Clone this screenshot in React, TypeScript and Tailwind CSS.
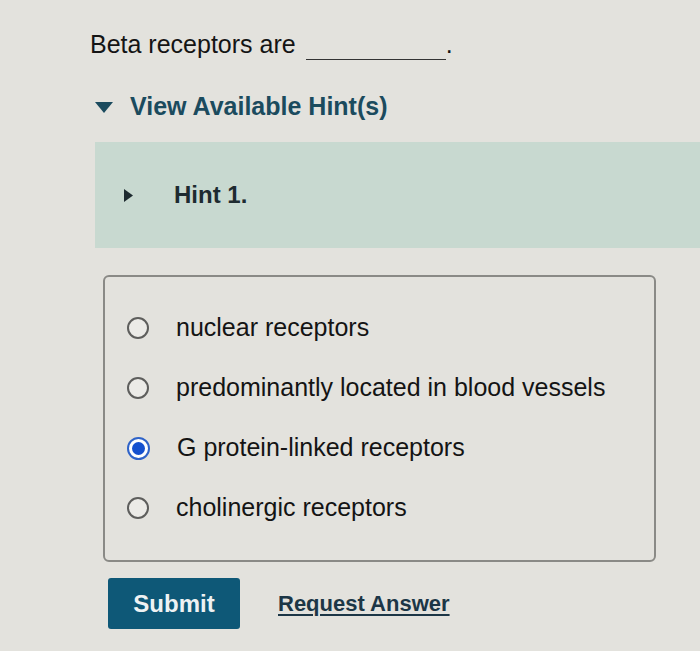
import React from 'react';

const options = [
  'nuclear receptors',
  'predominantly located in blood vessels',
  'G protein-linked receptors',
  'cholinergic receptors',
];

const App: React.FC = () => {
  const selected = 2;

  return (
    <div
      className="min-h-[651px] w-[700px] bg-[#e3e2dd] pl-[90px] pt-[30px] text-[#141414] overflow-hidden"
      style={{ fontFamily: '"Liberation Sans", Arial, sans-serif' }}
    >
      {/* question */}
      <div className="flex h-[30px] items-center text-[25px]">
        <span>Beta receptors are</span>
        <span className="ml-[10px] inline-block h-[30px] w-[140px] border-b border-[#333]"></span>
        <span>.</span>
      </div>

      {/* hints toggle */}
      <div className="mt-[32px] flex h-[30px] items-center">
        <svg width="18" height="11" viewBox="0 0 18 11" className="ml-[5px]">
          <path d="M0 0 H18 L9 11 Z" fill="#1b4b5e" />
        </svg>
        <span className="ml-[17px] text-[25px] font-bold text-[#1b4b5e]">View Available Hint(s)</span>
      </div>

      {/* hint panel */}
      <div className="ml-[5px] mt-[20px] flex h-[106px] items-center bg-[#c8d9d0] pl-[29px]">
        <svg width="9" height="13" viewBox="0 0 9 13">
          <path d="M0 0 L9 6.5 L0 13 Z" fill="#1e2b30" />
        </svg>
        <span className="ml-[41px] text-[24px] font-bold text-[#1e2b30]">Hint 1.</span>
      </div>

      {/* answer options */}
      <div className="ml-[13px] mt-[27px] h-[287px] w-[553px] rounded-[6px] border-2 border-[#8a8a86] pt-[21px]">
        {options.map((opt, i) => (
          <div key={i} className="flex h-[60px] items-center pl-[22px]">
            {i === selected ? (
              <span className="flex h-[23px] w-[23px] items-center justify-center rounded-full border-2 border-[#2f63c8] bg-white">
                <span className="h-[13px] w-[13px] rounded-full bg-[#1551cf]"></span>
              </span>
            ) : (
              <span className="h-[22px] w-[22px] rounded-full border-2 border-[#5e5e5c] bg-[#ecebe7]"></span>
            )}
            <span className="ml-[27px] text-[25px]">{opt}</span>
          </div>
        ))}
      </div>

      {/* actions */}
      <div className="ml-[18px] mt-[16px] flex items-center">
        <button className="h-[51px] w-[132px] rounded-[3px] bg-[#0e5877] text-[24px] font-bold text-[#eef2f3]">
          Submit
        </button>
        <a className="ml-[38px] text-[22px] font-bold text-[#1c3646] underline underline-offset-[3px]" href="#">
          Request Answer
        </a>
      </div>
    </div>
  );
};

export default App;
